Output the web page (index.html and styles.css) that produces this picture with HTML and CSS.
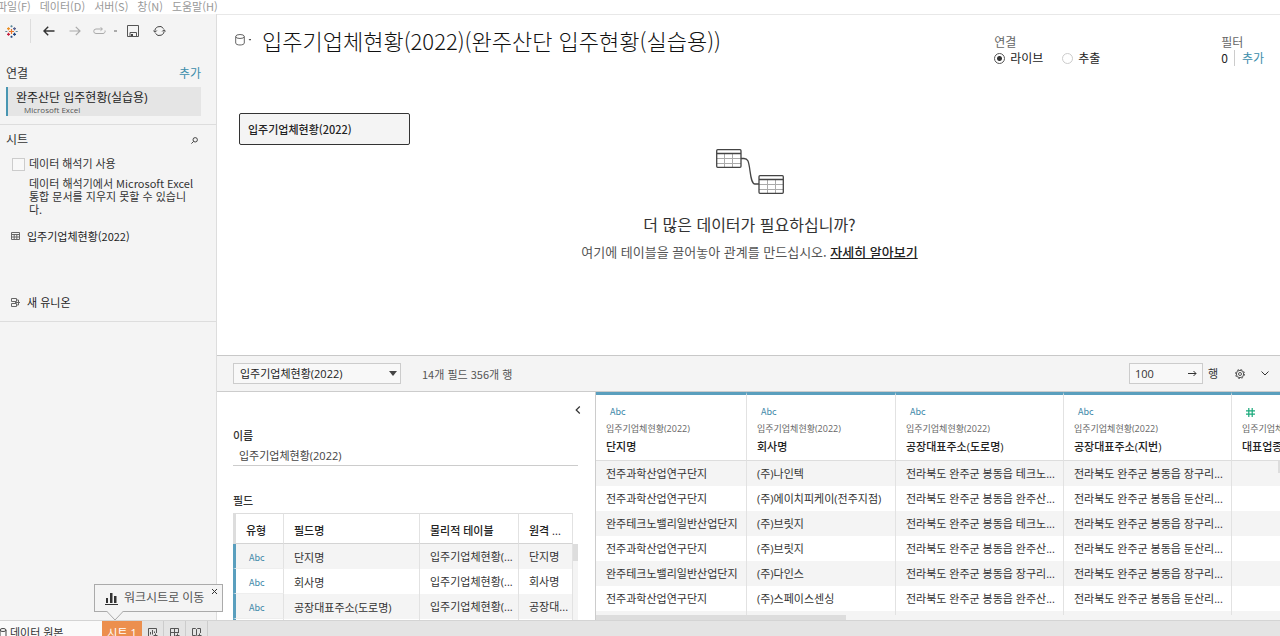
FILE: index.html
```html
<!DOCTYPE html>
<html lang="ko">
<head>
<meta charset="utf-8">
<title>데이터 원본</title>
<link rel="stylesheet" href="styles.css">
</head>
<body>
<nav class="menubar">
  <button>파일(F)</button><button>데이터(D)</button><button>서버(S)</button><button>창(N)</button><button>도움말(H)</button>
</nav>
<div class="workspace">
  <aside class="sidebar">
    <div class="toolbar">
      <button class="tool logo" aria-label="시작 페이지"><svg width="13" height="13" viewBox="0 0 13 13" fill="none" stroke-width="1.2"><path stroke="#e8762c" d="M6.5 4v5M4 6.5h5"/><path stroke="#c7203f" d="M3.5 7.8v3M2 9.3h3"/><path stroke="#5b6591" d="M9.5 2.2v3M8 3.7h3"/><path stroke="#eb9129" d="M3.5 2.2v3M2 3.7h3"/><path stroke="#1f447e" d="M9.5 7.8v3M8 9.3h3M6.5 10.8v2M5.5 11.8h2"/><path stroke="#5b879b" d="M6.5 .3v2M5.5 1.3h2M.3 6.5h2M10.7 6.5h2"/></svg></button>
      <span class="tool-divider"></span>
      <button class="tool back" aria-label="뒤로"><svg width="12" height="10" viewBox="0 0 12 10" fill="none" stroke="#333" stroke-width="1.4"><path d="M11.5 5H1M5.2.8 1 5l4.2 4.2"/></svg></button>
      <button class="tool forward" aria-label="앞으로"><svg width="12" height="10" viewBox="0 0 12 10" fill="none" stroke="#aaa" stroke-width="1.2"><path d="M.5 5H11M6.8.8 11 5 6.8 9.2"/></svg></button>
      <button class="tool replay" aria-label="다시 실행"><svg width="13" height="8" viewBox="0 0 13 8" fill="none" stroke="#aaa"><path d="M9 2H3a2.200 2.200 0 0 0 0 4.500h7a2.200 2.200 0 0 0 2-3M7.500.3 9.500 2 7.500 3.700"/></svg></button>
      <span class="tiny-caret"></span>
      <button class="tool save" aria-label="저장"><svg width="12" height="12" viewBox="0 0 12 12" fill="none" stroke="#555"><path d="M.5.500h11v11H.500zM3 11V7.500h6.500V11"/><path d="M4 9h2v2H4z" fill="#444" stroke="none"/></svg></button>
      <button class="tool refresh" aria-label="새로 고침"><svg width="13" height="12" viewBox="0 0 13 12" fill="none" stroke="#444"><path d="M2 7A4.700 4.700 0 0 1 10.500 3.500M11 5A4.700 4.700 0 0 1 2.500 8.500M.3 5.500 2 7.300 3.800 5.500M9.200 6.500 11 4.700 12.700 6.500"/></svg></button>
    </div>
    <section class="connections">
      <header class="side-head"><h2>연결</h2><a class="link" href="#">추가</a></header>
      <button class="connection"><span class="conn-name">완주산단 입주현황(실습용)</span><span class="conn-type">Microsoft Excel</span></button>
    </section>
    <section class="sheets">
      <header class="side-head"><h2>시트</h2><button class="tool" aria-label="검색"><svg width="7" height="7" viewBox="0 0 7 7" fill="none" stroke="#444"><circle cx="4.200" cy="2.800" r="2.200"/><path d="M2.600 4.400.4 6.600"/></svg></button></header>
      <label class="interpreter"><input type="checkbox">데이터 해석기 사용</label>
      <p class="hint">데이터 해석기에서 Microsoft Excel 통합 문서를 지우지 못할 수 있습니다.</p>
      <button class="sheet-item"><svg width="9" height="8" viewBox="0 0 9 8" fill="none" stroke="#666"><path d="M.5.500h8v7h-8zM.5 2.500h8M.5 5h8M3.200 2v6M5.800 2v6"/></svg>입주기업체현황(2022)</button>
      <button class="sheet-item union"><svg width="9" height="9" viewBox="0 0 9 9" fill="none" stroke="#666"><path d="M.5.500h5v3h-5zM.5 5.500h5v3h-5zM5.500 2h2v5h-2M4 4.500h5"/></svg>새 유니온</button>
    </section>
  </aside>
  <main class="main">
    <section class="canvas">
      <header class="source-head">
        <button class="tool source-icon" aria-label="데이터 원본 메뉴"><svg width="16" height="12" viewBox="0 0 16 12" fill="none" stroke="#666"><ellipse cx="5" cy="2.500" rx="4.300" ry="2"/><path d="M.7 2.500v6.500c0 1.200 1.800 2 4.300 2s4.300-.8 4.300-2V2.500"/><path d="M13.500 5h3l-1.500 1.800z" fill="#555" stroke="none"/></svg></button>
        <h1>입주기업체현황(2022)(완주산단 입주현황(실습용))</h1>
        <fieldset class="mode"><legend>연결</legend>
          <label><input type="radio" name="mode" checked>라이브</label>
          <label><input type="radio" name="mode">추출</label>
        </fieldset>
        <div class="filters"><span>필터</span><div class="filter-row"><b>0</b><a class="link" href="#">추가</a></div></div>
      </header>
      <button class="table-node">입주기업체현황(2022)</button>
      <div class="empty">
        <svg width="68" height="46" viewBox="0 0 68 46" fill="none"><g stroke="#aaa"><path d="M8.500 5v13M16.500 5v13M1 9.500h24M1 14.500h24M51.500 31v13M59.500 31v13M43 35.500h24M43 40.500h24"/></g><g stroke="#444" stroke-width="1.3"><rect x=".7" y=".7" width="24.3" height="17.6" rx="1"/><path d="M1 4.500h24M43 30.500h24M25 9.500h3c4 0 4.500 3 5.500 9s1.500 16.500 5.500 16.500h4"/><rect x="43" y="26.7" width="24.3" height="17.6" rx="1"/></g></svg>
        <h2>더 많은 데이터가 필요하십니까?</h2>
        <p>여기에 테이블을 끌어놓아 관계를 만드십시오. <a href="#">자세히 알아보기</a></p>
      </div>
    </section>
    <div class="gridbar">
      <span class="select-wrap"><select aria-label="테이블"><option>입주기업체현황(2022)</option></select></span>
      <span class="counts">14개 필드 356개 행</span>
      <label class="rows"><span class="row-box"><input type="text" value="100"><svg width="9" height="7" viewBox="0 0 9 7" fill="none" stroke="#333"><path d="M0 3.500h8M5.500 1 8 3.500 5.500 6"/></svg></span>행</label>
      <button class="tool gear" aria-label="설정"><svg width="10" height="10" viewBox="0 0 10 10" fill="none" stroke="#555"><circle cx="5" cy="5" r="3.700"/><circle cx="5" cy="5" r="1.500"/><circle cx="5" cy="5" r="4.500" stroke-dasharray="1.770 1.770"/></svg></button>
      <button class="tool" aria-label="접기"><svg width="8" height="5" viewBox="0 0 8 5" fill="none" stroke="#333"><path d="M.5.500 4 4 7.500.500"/></svg></button>
    </div>
    <div class="detail">
      <section class="meta">
        <button class="tool collapse" aria-label="접기"><svg width="6" height="8" viewBox="0 0 6 8" fill="none" stroke="#333" stroke-width="1.2"><path d="M4.800.5 1.200 4l3.600 3.500"/></svg></button>
        <label class="name-label" for="tname">이름</label>
        <input class="name-input" id="tname" type="text" value="입주기업체현황(2022)">
        <h3>필드</h3>
        <div class="fields-wrap">
          <table class="fields">
            <colgroup><col class="f1"><col class="f2"><col class="f3"><col class="f4"></colgroup>
            <thead><tr><th>유형</th><th>필드명</th><th>물리적 테이블</th><th>원격 ...</th></tr></thead>
            <tbody>
              <tr><td class="abc">Abc</td><td>단지명</td><td>입주기업체현황(...</td><td>단지명</td></tr>
              <tr><td class="abc">Abc</td><td>회사명</td><td>입주기업체현황(...</td><td>회사명</td></tr>
              <tr><td class="abc">Abc</td><td>공장대표주소(도로명)</td><td>입주기업체현황(...</td><td>공장대...</td></tr>
              <tr><td class="abc"></td><td></td><td></td><td></td></tr>
            </tbody>
          </table>
          <div class="vscroll"><i></i></div>
        </div>
      </section>
      <section class="data">
        <table class="grid">
          <colgroup><col class="g1"><col class="g2"><col class="g3"><col class="g3"><col class="g3"></colgroup>
          <thead><tr>
            <th><span class="type">Abc</span><span class="src">입주기업체현황(2022)</span>단지명</th>
            <th><span class="type">Abc</span><span class="src">입주기업체현황(2022)</span>회사명</th>
            <th><span class="type">Abc</span><span class="src">입주기업체현황(2022)</span>공장대표주소(도로명)</th>
            <th><span class="type">Abc</span><span class="src">입주기업체현황(2022)</span>공장대표주소(지번)</th>
            <th><span class="type"><svg width="9" height="9" viewBox="0 0 9 9" stroke="#19a97b" stroke-width="1.2"><path d="M2.800 0v9M6.200 0v9M0 2.800h9M0 6.200h9"/></svg></span><span class="src">입주기업체현황(2022)</span>대표업종</th>
          </tr></thead>
          <tbody>
            <tr><td>전주과학산업연구단지</td><td>(주)나인텍</td><td>전라북도 완주군 봉동읍 테크노...</td><td>전라북도 완주군 봉동읍 장구리...</td><td></td></tr>
            <tr><td>전주과학산업연구단지</td><td>(주)에이치피케이(전주지점)</td><td>전라북도 완주군 봉동읍 완주산...</td><td>전라북도 완주군 봉동읍 둔산리...</td><td></td></tr>
            <tr><td>완주테크노밸리일반산업단지</td><td>(주)브릿지</td><td>전라북도 완주군 봉동읍 테크노...</td><td>전라북도 완주군 봉동읍 장구리...</td><td></td></tr>
            <tr><td>전주과학산업연구단지</td><td>(주)브릿지</td><td>전라북도 완주군 봉동읍 완주산...</td><td>전라북도 완주군 봉동읍 둔산리...</td><td></td></tr>
            <tr><td>완주테크노밸리일반산업단지</td><td>(주)다인스</td><td>전라북도 완주군 봉동읍 장구리...</td><td>전라북도 완주군 봉동읍 장구리...</td><td></td></tr>
            <tr><td>전주과학산업연구단지</td><td>(주)스페이스센싱</td><td>전라북도 완주군 봉동읍 완주산...</td><td>전라북도 완주군 봉동읍 둔산리...</td><td></td></tr>
            <tr><td></td><td></td><td></td><td></td><td></td></tr>
          </tbody>
        </table>
        <div class="hscroll"><i></i></div>
        <div class="grid-vscroll"></div>
      </section>
    </div>
  </main>
</div>
<footer class="tabs">
  <button class="tab source"><svg width="8" height="10" viewBox="0 0 8 10" fill="none" stroke="#444"><ellipse cx="3" cy="2" rx="3" ry="1.500"/><path d="M0 2v6c0 2 6 2 6 0V2"/></svg>데이터 원본</button>
  <button class="tab sheet">시트 1</button>
  <button class="tab new" aria-label="새 워크시트"><svg width="10" height="10" viewBox="0 0 10 10" fill="none" stroke="#555"><path d="M6 8.500H.500v-8h8V5M2.500 6.500V4M4.500 6.500V2M6.500 5V3.500M5.500 7.500h4M7.500 5.500v4"/></svg></button>
  <button class="tab new" aria-label="새 대시보드"><svg width="10" height="10" viewBox="0 0 10 10" fill="none" stroke="#555"><path d="M6 8.500H.500v-8h8V5M.5 4.500h8M4.500.500v8M5.500 7.500h4M7.500 5.500v4"/></svg></button>
  <button class="tab new" aria-label="새 스토리"><svg width="10" height="10" viewBox="0 0 10 10" fill="none" stroke="#555"><path d="M5 8.500 3.500 7.500h-3v-7h3l1 1 1-1h3V5M4.500 1.500v6M5.500 7.500h4M7.500 5.500v4"/></svg></button>
</footer>
<div class="callout" role="status">
  <svg width="13" height="13" viewBox="0 0 13 13" fill="#333"><path d="M1 6h2v5H1zM5 1h2.500v10H5zM9 4h2.500v7H9zM0 12h13v1H0z"/></svg>
  <span>워크시트로 이동</span>
  <button class="close" aria-label="닫기"><svg width="5" height="5" viewBox="0 0 5 5" stroke="#333"><path d="M0 0l5 5M5 0 0 5"/></svg></button>
  <svg class="pointer" width="18" height="10" viewBox="0 0 18 10"><path d="M.5 0 9 9 17.500 0" fill="#f4f4f4" stroke="#aaa"/></svg>
</div>
</body>
</html>
```
FILE: styles.css
```css
* { box-sizing: border-box; }
body {
  margin: 0;
  height: 100vh;
  display: flex;
  flex-direction: column;
  position: relative;
  overflow: hidden;
  background: #fff;
  color: #333;
  font: 11px/16px "Open Sans", "Noto Sans CJK KR", sans-serif;
}
button, input, select { font: inherit; color: inherit; }
button { border: 0; padding: 0; background: none; text-align: left; white-space: nowrap; }
h1, h2, h3, p { margin: 0; font-weight: 400; }
svg { display: block; flex: none; }
.link { color: #3b8dab; text-decoration: none; font-size: 12px; }
.tool { display: flex; align-items: center; }

.menubar { flex: 0 0 14px; display: flex; align-items: center; gap: 9px; margin-left: -3px; color: #999; font-family: "Noto Sans CJK KR", sans-serif; }
.menubar button { line-height: 12px; padding-bottom: 2px; }

.workspace { flex: 1; min-height: 0; display: flex; }
.sidebar { flex: 0 0 217px; background: #f4f4f4; border-right: 1px solid #ddd; }
.toolbar { height: 34px; display: flex; align-items: center; padding-left: 5px; }
.tool-divider { width: 1px; height: 24px; margin: 0 12px; background: #ddd; }
.forward { margin-left: 14px; }
.replay { margin-left: 12px; }
.tiny-caret { width: 3px; height: 2px; margin: 0 10px 0 8px; background: #aaa; }
.refresh { margin-left: 14px; }

.connections { padding: 18px 15px 8px 6px; border-bottom: 1px solid #ddd; }
.side-head { display: flex; justify-content: space-between; align-items: center; height: 16px; }
.side-head h2 { font-size: 12px; }
.connection { display: flex; flex-direction: column; justify-content: flex-start; width: 100%; margin-top: 5px; padding: 3px 0 0 8px; height: 29px; background: #e5e5e5; border-left: 2px solid #4996b2; color: #222; }
.conn-name { font-size: 12px; line-height: 15px; }
.conn-type { padding-left: 8px; font-size: 8px; line-height: 9px; color: #555; }
.sheets { padding: 7px 18px 11px 6px; border-bottom: 1px solid #ddd; }
.interpreter { display: flex; align-items: center; gap: 4px; margin-top: 8px; padding-left: 6px; }
.interpreter input { appearance: none; width: 13px; height: 13px; margin: 0; background: #f8f8f8; border: 1px solid #ccc; }
.hint { margin: 5px 4px 0 23px; line-height: 13px; word-break: break-all; font-family: "Noto Sans CJK KR", sans-serif; }
.sheet-item { display: flex; align-items: center; gap: 7px; margin-top: 12px; padding-left: 5px; color: #222; font-family: "Noto Sans CJK KR", sans-serif; }
.union { margin-top: 50px; }

.main { flex: 1; min-width: 0; display: flex; flex-direction: column; }
.canvas { flex: 1; min-height: 0; border-top: 1px solid #e8e8e8; font-family: "Noto Sans CJK KR", sans-serif; }
.source-head { display: flex; align-items: flex-start; padding: 11px 16px 0 18px; }
.source-icon { height: 28px; }
.source-head h1 { margin-left: 11px; font-size: 22px; line-height: 28px; white-space: nowrap; color: #111; font-weight: 300; }
.mode { display: grid; grid-template-columns: 68px auto; margin: 8px 0 0 auto; padding: 0; border: 0; font-size: 12px; }
.mode legend { padding: 0; color: #666; }
.mode label { display: flex; align-items: center; gap: 5px; color: #222; }
.mode input { appearance: none; width: 11px; height: 11px; margin: 0; border: 1px solid #ccc; border-radius: 50%; }
.mode input:checked { border-color: #555; background: radial-gradient(circle, #333 2px, transparent 3px); }
.filters { margin: 8px 0 0 121px; font-size: 12px; color: #666; }
.filter-row { display: flex; color: #222; }
.filter-row b { font-weight: 400; padding-right: 6px; border-right: 1px solid #ccc; margin-right: 7px; }
.table-node { display: block; width: 171px; height: 32px; margin: 47px 0 0 22px; padding-left: 8px; border: 1px solid #333; border-radius: 2px; background: #f4f4f4; color: #222; font-weight: 500; }
.empty { display: flex; flex-direction: column; align-items: center; padding: 4px 0 0 2px; text-align: center; }
.empty h2 { margin-top: 18px; font-size: 16px; line-height: 22px; }
.empty p { margin-top: 8px; font-size: 13px; line-height: 18px; color: #555; }
.empty a { color: #222; font-weight: 500; }

.gridbar { flex: 0 0 37px; display: flex; align-items: center; padding: 0 11px 0 16px; background: #f4f4f4; border-top: 1px solid #c8c8c8; border-bottom: 1px solid #ccc; }
.select-wrap { position: relative; width: 168px; }
.select-wrap::after { content: ""; position: absolute; right: 4px; top: 8px; border: 4px solid transparent; border-top: 5px solid #444; border-bottom: 0; pointer-events: none; }
.select-wrap select { appearance: none; display: block; width: 100%; height: 21px; padding: 0 6px; border: 1px solid #ccc; border-radius: 0; background: #f8f8f8; color: #222; }
.counts { margin-left: 21px; color: #555; font-family: "Noto Sans CJK KR", sans-serif; }
.rows { display: flex; align-items: center; gap: 5px; margin-left: auto; }
.row-box { display: flex; align-items: center; justify-content: space-between; width: 74px; height: 21px; padding: 0 5px; border: 1px solid #ccc; background: #f8f8f8; }
.row-box input { width: 48px; border: 0; padding: 0; background: none; }
.gear { margin: 0 16px 0 17px; }

.detail { flex: 0 0 228px; display: flex; min-height: 0; }
.meta { flex: 0 0 378px; padding: 14px 17px 0 16px; overflow: hidden; display: flex; flex-direction: column; }
.collapse { align-self: flex-end; height: 8px; margin-right: -3px; }
.name-label { margin-top: 14px; font-weight: 500; }
.name-input { flex: none; height: 22px; padding: 0 6px; border: 0; border-bottom: 1px solid #ccc; background: none; color: #444; }
.meta h3 { margin-top: 27px; font-size: 11px; font-weight: 500; }
.fields-wrap { display: flex; margin-top: 4px; }
table { border-collapse: separate; border-spacing: 0; table-layout: fixed; }
th, td { overflow: hidden; text-overflow: ellipsis; white-space: nowrap; text-align: left; padding: 0 6px 0 10px; border-right: 1px solid #e2e2e2; }
th { font-weight: 500; color: #222; }
tbody tr:nth-child(odd) { background: #f4f4f4; }
.fields { width: 340px; flex: none; }
.f1 { width: 51px; } .f2 { width: 136px; } .f3 { width: 99px; } .f4 { width: 54px; }
.fields th { height: 31px; padding-top: 4px; border-top: 1px solid #ddd; border-bottom: 1px solid #d4d4d4; }
.fields th:first-child { border-left: 3px solid #ddd; }
.fields td { height: 25px; padding-right: 2px; }
.fields .abc { border-left: 3px solid #5a9fbe; border-bottom: 1px solid #eee; padding: 3px 0 0 13px; }
.abc, .type { font: 9px/16px "Noto Sans CJK KR", sans-serif; color: #3b87a8; }
.fields td:nth-child(2) { padding-top: 2px; }
.vscroll { width: 5px; margin-top: 31px; background: #f4f4f4; }
.vscroll i { display: block; height: 17px; background: #ddd; }

.data { flex: 1; min-width: 0; position: relative; overflow: hidden; border-left: 1px solid #ccc; }
.grid { width: 804px; }
.g1 { width: 151px; } .g2 { width: 149px; } .g3 { width: 168px; }
.grid th { height: 69px; padding: 9px 6px 0 10px; border-top: 3px solid #5a9fbe; border-bottom: 1px solid #ddd; vertical-align: top; line-height: 20px; }
.type { display: flex; align-items: center; height: 16px; padding-left: 4px; }
.src { display: block; font-size: 9px; line-height: 17px; font-weight: 400; color: #666; }
.grid td { height: 25px; }
.hscroll { position: absolute; inset: auto 0 0 0; height: 5px; background: #f4f4f4; }
.hscroll i { display: block; width: 250px; height: 5px; background: #ddd; }
.grid-vscroll { position: absolute; right: 0; top: 69px; width: 2px; height: 12px; background: #ddd; }

.tabs { flex: 0 0 16px; display: flex; align-items: flex-start; overflow: hidden; background: #e4e4e4; border-top: 1px solid #d4d4d4; }
.tab { display: flex; align-items: center; justify-content: center; height: 24px; }
.source { width: 102px; justify-content: flex-start; gap: 2px; background: #fafafa; }
.sheet { width: 40px; background: #ec8f4e; color: #fff; }
.new { width: 22px; border-right: 1px solid #ccc; }

.callout { position: absolute; left: 94px; bottom: 24px; display: flex; align-items: center; gap: 6px; width: 129px; height: 28px; padding-left: 10px; border: 1px solid #aaa; background: #f4f4f4; font-size: 12px; color: #555; white-space: nowrap; }
.close { position: absolute; right: 5px; top: 4px; }
.pointer { position: absolute; left: 11px; top: 26px; }
```
